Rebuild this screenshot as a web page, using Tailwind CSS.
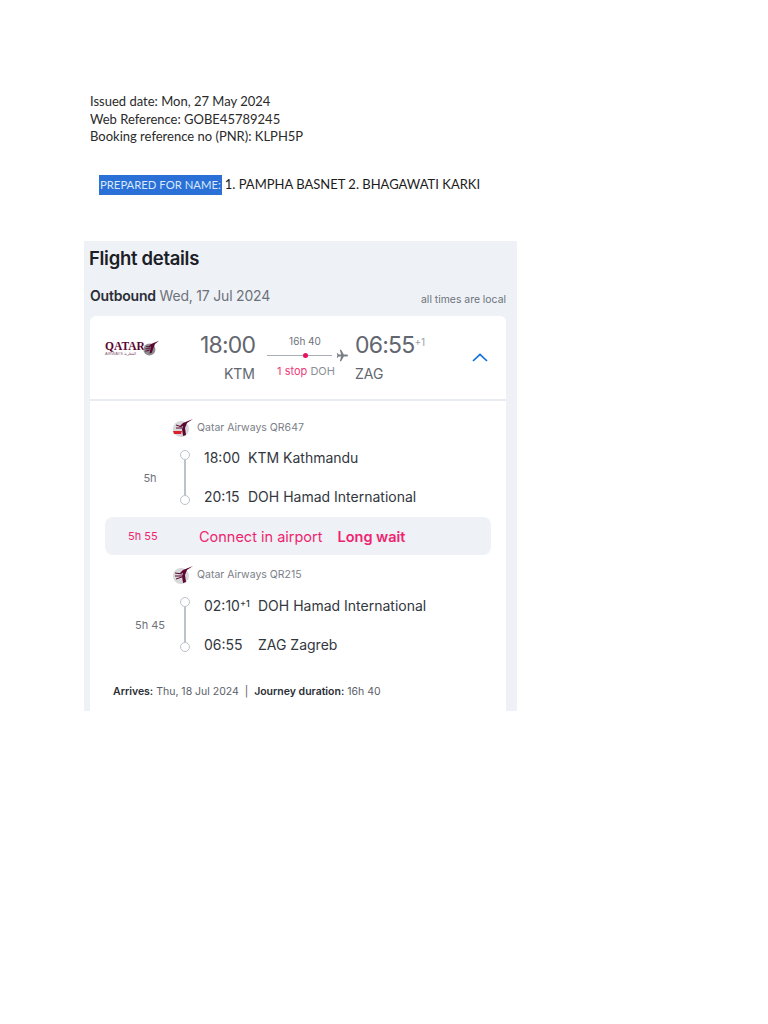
<!DOCTYPE html>
<html lang="en">
<head>
<meta charset="UTF-8">
<meta name="viewport" content="width=device-width, initial-scale=1.0">
<title>Flight details</title>
<script src="https://cdn.jsdelivr.net/npm/@tailwindcss/browser@4"></script>
</head>
<body class="bg-white h-[1024px] overflow-hidden font-['Inter',sans-serif] text-[#3a3f47]">

<!-- Booking text -->
<section class="pl-[90px] pt-[93px] h-[241px] font-['Lato',sans-serif] text-[13px] leading-[17.5px] text-[#2a2a2a]">
  <p>Issued date: Mon, 27 May 2024</p>
  <p>Web Reference: GOBE45789245</p>
  <p>Booking reference no (PNR): KLPH5P</p>
  <p class="mt-[29px] ml-[9px] flex items-center text-[13px] text-[#1c1c1c]">
    <span class="bg-[#2a70d6] text-[#d9e8fb] text-[11.3px] leading-[20px] px-px">PREPARED FOR NAME:</span>
    <span class="ml-[3px]">1. PAMPHA BASNET 2. BHAGAWATI KARKI</span>
  </p>
</section>

<!-- Flight panel -->
<section class="ml-[84px] w-[433px] h-[470px] overflow-hidden bg-[#eef1f6] px-[6px] flex flex-col">
  <h2 class="pt-[5px] -ml-px h-[36px] text-[18.5px] leading-[24px] font-semibold text-[#1c2026] tracking-[-0.3px]">Flight details</h2>
  <div class="mt-[10px] h-[29px] pr-[5px] flex justify-between">
    <p class="text-[14px] leading-[18px] text-[#6d727a] tracking-[-0.2px]"><b class="font-semibold text-[#2a2e35]">Outbound</b> Wed, 17 Jul 2024</p>
    <p class="text-[10.4px] leading-[14px] pt-[6px] text-[#6d727a]">all times are local</p>
  </div>

  <div class="bg-white rounded-t-[6px] w-[416px] flex-1">
    <!-- Summary row -->
    <div class="h-[85px] border-b-2 border-[#e8ebf1] flex relative">
      <div class="w-[110px] pl-[15px] pt-[25px] flex items-start">
        <div class="w-[38px]">
          <p class="font-['Liberation_Serif',serif] font-bold text-[11.5px] leading-[11px] text-[#5c0632]">QATAR</p>
          <p class="font-['Liberation_Sans',sans-serif] text-[4px] leading-[4px] text-[#8a5a72]">AIRWAYS القطرية</p>
        </div>
        <svg class="w-[16px] h-[16px] -mt-[1px]" viewBox="0 0 20 20">
          <circle cx="8" cy="12" r="7.500" fill="#8d8d90"/>
          <path d="M20 1 10 5 6 9l4-1-2 9 3-1 2-6 2-5z" fill="#5c0632"/>
          <path d="M4 8 9 9M3 11l6 0M3 14l5-1" stroke="#5c0632" stroke-width="1.200"/>
        </svg>
      </div>
      <div class="w-[55px] pt-[14px] text-right">
        <p class="text-[23px] leading-[30px] text-[#62666e] tracking-[-0.8px]">18:00</p>
        <p class="text-[14px] leading-[18px] mt-[5px] text-[#62666e]">KTM</p>
      </div>
      <div class="w-[68px] ml-[12px] pt-[18px] text-center">
        <p class="ml-[8px] text-[10px] leading-[14px] text-[#6d727a]">16h 40</p>
        <div class="mt-[7px] w-[65px] h-px bg-[#a9aeb6] relative">
          <span class="absolute left-[36px] -top-[2px] w-[5px] h-[5px] rounded-full bg-[#e8105f]"></span>
        </div>
        <p class="ml-[10px] text-[11px] leading-[14px] mt-[8px] whitespace-nowrap text-[#8a8f97]"><span class="text-[#ee3a7a]">1 stop</span> DOH</p>
      </div>
      <svg class="w-[13px] h-[13px] ml-[1px] mt-[33px]" viewBox="0 0 24 24" fill="#7a7f87">
        <path d="M22 12c0-1-1-1.800-2-1.800h-5.500L9.500 1.500H7l2.500 8.700H5L3.200 8H1.500l1 4-1 4h1.700L5 13.800h4.500L7 22.500h2.500l5-8.700H20c1 0 2-.8 2-1.800z"/>
      </svg>
      <div class="ml-[6px] pt-[14px]">
        <p class="text-[23px] leading-[30px] text-[#62666e] tracking-[-0.8px] flex">06:55<span class="text-[10px] leading-[20px] tracking-normal mt-[2px] text-[#9a9ea6]">+1</span></p>
        <p class="text-[14px] leading-[18px] mt-[5px] text-[#62666e]">ZAG</p>
      </div>
      <svg class="absolute left-[381px] top-[36px] w-[18px] h-[11px]" viewBox="0 0 18 11" fill="none">
        <path d="M2 9 9 2.500 16 9" stroke="#0f6fe0" stroke-width="1.700"/>
      </svg>
    </div>

    <!-- First leg -->
    <div class="pt-[17px] h-[116px]">
      <div class="flex items-center h-[20px] pl-[83px]">
        <svg class="w-[20px] h-[20px]" viewBox="0 0 20 20">
          <circle cx="8" cy="11" r="8" fill="#d8d8da"/>
          <path d="M0 13h9l-1 3H1z" fill="#d8232a"/>
          <path d="M20 1 10 5 6 9l4-1-1 3 1 7 3-1-1-7 2-5z" fill="#5c0632"/>
          <path d="M3 7l6 2M3 10h6" stroke="#5c0632" stroke-width="1"/>
        </svg>
        <p class="ml-[4px] text-[10.5px] text-[#7b8088]">Qatar Airways QR647</p>
      </div>
      <div class="flex h-[59px] mt-[11px]">
        <p class="w-[90px] pl-[30px] mt-[22px] text-center text-[11px] leading-[14px] text-[#6d727a]">5h</p>
        <div class="mt-[1px] h-[55px] flex flex-col items-center w-[10px]">
          <span class="w-[10px] h-[10px] rounded-full border-[1.5px] border-[#bcc2cc]"></span>
          <span class="w-[2px] flex-1 bg-[#bcc2cc]"></span>
          <span class="w-[10px] h-[10px] rounded-full border-[1.5px] border-[#bcc2cc]"></span>
        </div>
        <div class="ml-[14px] -mt-px h-[59px] flex flex-col justify-between text-[14px] leading-[20px] text-[#33373e]">
          <p class="flex"><span class="w-[44px]">18:00</span>KTM Kathmandu</p>
          <p class="flex"><span class="w-[44px]">20:15</span>DOH Hamad International</p>
        </div>
      </div>
    </div>

    <!-- Connection -->
    <div class="mx-[15px] h-[38px] pt-px rounded-[8px] bg-[#eef1f6] flex items-center text-[#f0246e]">
      <p class="w-[94px] pl-[23px] text-[11px]">5h 55</p>
      <p class="text-[14.5px]">Connect in airport</p>
      <p class="ml-[15px] text-[14.5px] font-semibold">Long wait</p>
    </div>

    <!-- Second leg -->
    <div class="pt-[10px]">
      <div class="flex items-center h-[20px] pl-[83px]">
        <svg class="w-[20px] h-[20px]" viewBox="0 0 20 20">
          <circle cx="8" cy="11" r="8" fill="#d8d8da"/>
          <path d="M20 1 10 5 6 9l4-1-1 3 1 7 3-1-1-7 2-5z" fill="#5c0632"/>
          <path d="M2 8l7 1M2 11h7M3 14l6-2" stroke="#5c0632" stroke-width="1"/>
        </svg>
        <p class="ml-[4px] text-[10.5px] text-[#7b8088]">Qatar Airways QR215</p>
      </div>
      <div class="flex h-[59px] mt-[11px]">
        <p class="w-[90px] pl-[30px] mt-[22px] text-center text-[11px] leading-[14px] text-[#6d727a]">5h 45</p>
        <div class="mt-[1px] h-[55px] flex flex-col items-center w-[10px]">
          <span class="w-[10px] h-[10px] rounded-full border-[1.5px] border-[#bcc2cc]"></span>
          <span class="w-[2px] flex-1 bg-[#bcc2cc]"></span>
          <span class="w-[10px] h-[10px] rounded-full border-[1.5px] border-[#bcc2cc]"></span>
        </div>
        <div class="ml-[14px] h-[59px] flex flex-col justify-between text-[14px] leading-[20px] text-[#33373e]">
          <p class="flex"><span class="w-[54px]">02:10<sup class="text-[9px] font-medium">+1</sup></span>DOH Hamad International</p>
          <p class="flex"><span class="w-[54px]">06:55</span>ZAG Zagreb</p>
        </div>
      </div>
      <p class="mt-[30px] pl-[23px] text-[10.5px] leading-[14px] text-[#5c6068]"><b class="font-semibold text-[#2a2e35]">Arrives:</b> Thu, 18 Jul 2024 &nbsp;|&nbsp; <b class="font-semibold text-[#2a2e35]">Journey duration:</b> 16h 40</p>
    </div>
  </div>
</section>
</body>
</html>
